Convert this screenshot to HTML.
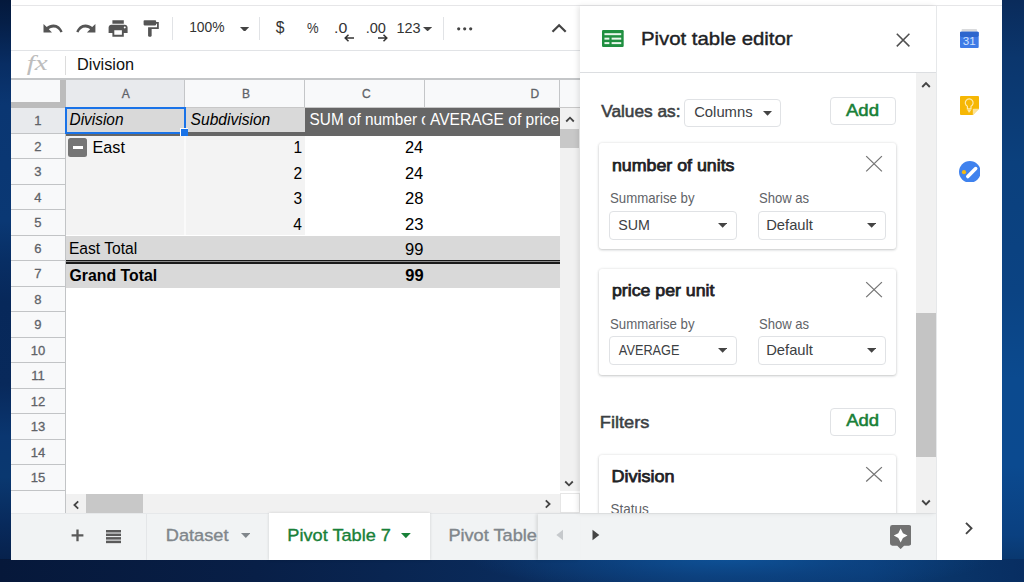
<!DOCTYPE html>
<html><head><meta charset="utf-8"><title>Pivot table editor</title>
<style>
*{box-sizing:border-box;margin:0;padding:0}
html,body{width:1024px;height:582px;overflow:hidden}
body{font-family:"Liberation Sans",sans-serif;background:#0a468a;position:relative;color:#202124}
div,span,svg{position:absolute}
#deskL{left:0;top:0;width:12px;height:582px;background:linear-gradient(180deg,#04193c 0%,#051f48 4%,#082d63 11%,#0a3672 18%,#0a3874 38%,#082e64 45%,#07285a 52%,#08295b 66%,#0a3670 75%,#0a3870 82%,#082a5c 90%,#061c42 100%)}
#deskR{left:1001px;top:0;width:23px;height:582px;background:linear-gradient(180deg,#0a2b5b 0%,#0b366d 10%,#0b407d 28%,#0b4383 50%,#0b4a8f 65%,#0b4a90 80%,#0a4080 92%,#08305f 100%)}
#deskB{left:0;top:559px;width:1024px;height:23px;background:radial-gradient(ellipse 260px 34px at 730px 0px,rgba(14,82,152,.95) 0%,rgba(13,72,138,.6) 50%,rgba(11,58,116,0) 100%),linear-gradient(90deg,#06183a 0%,#081f47 25%,#0a2b5b 50%,#0b3870 68%,#0a3a74 85%,#093468 93%,#082e62 100%)}
#win{left:11px;top:0;width:991px;height:560px;background:#fff}
.sep{top:17px;width:1px;height:23px;background:#e1e3e6}
.arr{width:0;height:0;border-left:4.7px solid transparent;border-right:4.7px solid transparent;border-top:5px solid #444}
.card{background:#fff;border-radius:3px;box-shadow:0 1px 2.500px rgba(60,64,67,.24),0 0 3px rgba(60,64,67,.12)}
.sel{border:1px solid #e0e2e5;border-radius:4px;background:#fff}
</style></head><body>
<div id="deskL"></div><div id="deskR"></div><div id="deskB"></div>
<div id="win"></div>

<div style="left:11px;top:0px;width:991.00px;height:5.00px;background:#fff;"></div>
<div style="left:12px;top:5px;width:990.00px;height:1.00px;background:#e6e6e8;"></div>
<div style="left:11px;top:50px;width:569.00px;height:1.00px;background:#e1e3e6;"></div>
<svg style="left:40px;top:16px" width="125" height="26" viewBox="0 0 125 26"><g fill="#555">
<path d="M13.5 8.5c-2.600 0-5 1-6.800 2.600L3.500 8v8.500H12l-3.200-3.200c1.300-1.100 2.900-1.800 4.700-1.800 3.200 0 5.900 2.100 6.900 5l2.200-.7C21.300 11.700 17.700 8.500 13.500 8.500z"/>
<path transform="translate(6.500,0)" d="M45.700 11.100C43.900 9.500 41.500 8.500 38.900 8.500c-4.200 0-7.800 3.200-9.100 7.300l2.200.7c1-2.900 3.700-5 6.900-5 1.800 0 3.400.7 4.700 1.800L40.400 16.500h8.500V8l-3.200 3.100z"/>
<path transform="translate(4.950,0.530) scale(0.95,0.917)" d="M84 9H70c-1.700 0-3 1.300-3 3v6h4v4h12v-4h4v-6c0-1.700-1.300-3-3-3zm-3 11h-8v-5h8v5zm3-7c-.55 0-1-.45-1-1s.45-1 1-1 1 .45 1 1-.45 1-1 1zM83 4H71v4h12V4z"/>
<path transform="translate(15.100,1.600) scale(0.894,0.868)" d="M113 5V4c0-.55-.45-1-1-1h-12c-.55 0-1 .45-1 1v4c0 .55.45 1 1 1h12c.55 0 1-.45 1-1V7h1v4h-10v10c0 .55.45 1 1 1h2c.55 0 1-.45 1-1v-8h8V5h-3z"/>
</g></svg>
<div class="sep" style="left:172px"></div>
<svg style="left:240.40px;top:26.60px" width="9.20" height="4.80" viewBox="0 0 10 5" preserveAspectRatio="none"><path d="M0 0H10L5 5z" fill="#444"/></svg>
<div class="sep" style="left:259px"></div>
<svg style="left:343px;top:33px" width="12" height="10" viewBox="0 0 12 10"><path d="M11 5H2.500M5.500 1.800L2.200 5l3.300 3.200" stroke="#333" stroke-width="1.500" fill="none"/></svg>
<svg style="left:377px;top:33px" width="12" height="10" viewBox="0 0 12 10"><path d="M1 5H9.500M6.500 1.800L9.800 5l-3.300 3.200" stroke="#333" stroke-width="1.500" fill="none"/></svg>
<svg style="left:423.20px;top:27.00px" width="9.20" height="4.30" viewBox="0 0 10 5" preserveAspectRatio="none"><path d="M0 0H10L5 5z" fill="#444"/></svg>
<div class="sep" style="left:443px"></div>
<svg style="left:455px;top:25px" width="20" height="8" viewBox="0 0 20 8"><g fill="#444"><circle cx="3.700" cy="3.800" r="1.600"/><circle cx="9.700" cy="3.800" r="1.600"/><circle cx="15.700" cy="3.800" r="1.600"/></g></svg>
<svg style="left:550px;top:21px" width="18" height="14" viewBox="0 0 18 14"><path d="M2.500 10.800 L9.100 4.200 L15.700 10.800" fill="none" stroke="#444" stroke-width="2.200"/></svg>
<div style="left:65px;top:56px;width:1.00px;height:19.00px;background:#dcdcdc;"></div>
<div style="left:11px;top:78px;width:569.00px;height:1.50px;background:#c4c6c8;"></div>
<div style="left:11px;top:79.5px;width:54.50px;height:28.50px;background:#bcbcbc;"></div>
<div style="left:11px;top:79.5px;width:49.20px;height:22.30px;background:#f8f9fa;"></div>
<div style="left:65.5px;top:79.5px;width:119.50px;height:28.50px;background:#e8eaed;border-right:1px solid #c4c6c8"></div>
<div style="left:185px;top:79.5px;width:120.00px;height:28.50px;background:#f8f9fa;border-right:1px solid #c4c6c8"></div>
<div style="left:305px;top:79.5px;width:120.30px;height:28.50px;background:#f8f9fa;border-right:1px solid #c4c6c8"></div>
<div style="left:425.3px;top:79.5px;width:134.50px;height:28.50px;background:#f8f9fa;border-right:1px solid #c4c6c8"></div>
<div style="left:559.8px;top:79.5px;width:20.20px;height:28.50px;background:#f8f9fa;"></div>
<div style="left:65.5px;top:106.8px;width:514.50px;height:1.20px;background:#c8c8c8;"></div>
<div style="left:11px;top:108.0px;width:54.50px;height:25.50px;background:#e8eaed;border-right:1.300px solid #c2c4c6;border-bottom:1.300px solid #c2c4c6"></div>
<div style="left:11px;top:133.5px;width:54.50px;height:25.50px;background:#f8f9fa;border-right:1.300px solid #c2c4c6;border-bottom:1.300px solid #c2c4c6"></div>
<div style="left:11px;top:159.0px;width:54.50px;height:25.50px;background:#f8f9fa;border-right:1.300px solid #c2c4c6;border-bottom:1.300px solid #c2c4c6"></div>
<div style="left:11px;top:184.5px;width:54.50px;height:25.50px;background:#f8f9fa;border-right:1.300px solid #c2c4c6;border-bottom:1.300px solid #c2c4c6"></div>
<div style="left:11px;top:210.0px;width:54.50px;height:25.50px;background:#f8f9fa;border-right:1.300px solid #c2c4c6;border-bottom:1.300px solid #c2c4c6"></div>
<div style="left:11px;top:235.5px;width:54.50px;height:25.50px;background:#f8f9fa;border-right:1.300px solid #c2c4c6;border-bottom:1.300px solid #c2c4c6"></div>
<div style="left:11px;top:261.0px;width:54.50px;height:25.50px;background:#f8f9fa;border-right:1.300px solid #c2c4c6;border-bottom:1.300px solid #c2c4c6"></div>
<div style="left:11px;top:286.5px;width:54.50px;height:25.50px;background:#f8f9fa;border-right:1.300px solid #c2c4c6;border-bottom:1.300px solid #c2c4c6"></div>
<div style="left:11px;top:312.0px;width:54.50px;height:25.50px;background:#f8f9fa;border-right:1.300px solid #c2c4c6;border-bottom:1.300px solid #c2c4c6"></div>
<div style="left:11px;top:337.5px;width:54.50px;height:25.50px;background:#f8f9fa;border-right:1.300px solid #c2c4c6;border-bottom:1.300px solid #c2c4c6"></div>
<div style="left:11px;top:363.0px;width:54.50px;height:25.50px;background:#f8f9fa;border-right:1.300px solid #c2c4c6;border-bottom:1.300px solid #c2c4c6"></div>
<div style="left:11px;top:388.5px;width:54.50px;height:25.50px;background:#f8f9fa;border-right:1.300px solid #c2c4c6;border-bottom:1.300px solid #c2c4c6"></div>
<div style="left:11px;top:414.0px;width:54.50px;height:25.50px;background:#f8f9fa;border-right:1.300px solid #c2c4c6;border-bottom:1.300px solid #c2c4c6"></div>
<div style="left:11px;top:439.5px;width:54.50px;height:25.50px;background:#f8f9fa;border-right:1.300px solid #c2c4c6;border-bottom:1.300px solid #c2c4c6"></div>
<div style="left:11px;top:465.0px;width:54.50px;height:25.50px;background:#f8f9fa;border-right:1.300px solid #c2c4c6;border-bottom:1.300px solid #c2c4c6"></div>
<div style="left:11px;top:490.5px;width:54.50px;height:22.50px;background:#f8f9fa;border-right:1.300px solid #c2c4c6"></div>
<div style="left:65.5px;top:108.0px;width:239.50px;height:25.50px;background:#d9d9d9;"></div>
<div style="left:305px;top:108.0px;width:254.80px;height:25.50px;background:#666;"></div>
<div style="left:65.5px;top:132px;width:494.30px;height:3.60px;background:#666;"></div>
<div style="left:65.5px;top:135.6px;width:239.50px;height:99.90px;background:#f3f3f3;"></div>
<div style="left:184px;top:135.7px;width:2.00px;height:99.80px;background:#fafafa;"></div>
<div style="left:65.5px;top:236.3px;width:494.30px;height:23.70px;background:#d9d9d9;"></div>
<div style="left:65.5px;top:259.9px;width:494.30px;height:3.80px;background:#1a1a1a;"></div>
<div style="left:65.5px;top:261.3px;width:494.30px;height:0.80px;background:#8a8a8a;"></div>
<div style="left:65.5px;top:263.7px;width:494.30px;height:24.50px;background:#d9d9d9;"></div>
<div style="left:68px;top:138.2px;width:19.00px;height:18.50px;background:#757575;border-radius:2.500px"></div>
<div style="left:73px;top:145.9px;width:9.60px;height:3.30px;background:#fff;"></div>
<div style="left:65px;top:107.300px;width:121px;height:27px;border:2px solid #1a73e8"></div>
<div style="left:180.100px;top:128.300px;width:8px;height:7.500px;background:#1a73e8;border-left:1px solid #fff;border-top:1px solid #fff"></div>
<div style="left:559.8px;top:108px;width:20.20px;height:383.00px;background:#f1f1f1;"></div>
<div style="left:560px;top:129.3px;width:19.30px;height:19.20px;background:#c8c8c8;"></div>
<svg style="left:563px;top:113.500px" width="14" height="10" viewBox="0 0 14 10"><path d="M3.200 7.500 L7 3.700 L10.800 7.500" fill="none" stroke="#444" stroke-width="1.800"/></svg>
<svg style="left:562.400px;top:478.500px" width="14" height="10" viewBox="0 0 14 10"><path d="M3.200 2.500 L7 6.300 L10.800 2.500" fill="none" stroke="#444" stroke-width="1.800"/></svg>
<div style="left:65.5px;top:491px;width:514.50px;height:3.20px;background:#fff;"></div>
<div style="left:65.5px;top:494.2px;width:494.50px;height:18.80px;background:#f1f1f1;"></div>
<div style="left:86.1px;top:494.2px;width:56.60px;height:18.80px;background:#c8c8c8;"></div>
<svg style="left:71px;top:497.600px" width="10" height="14" viewBox="0 0 10 14"><path d="M7.200 3.300 L3.400 7 L7.200 10.700" fill="none" stroke="#444" stroke-width="1.800"/></svg>
<svg style="left:543.300px;top:497.300px" width="10" height="14" viewBox="0 0 10 14"><path d="M2.800 3.300 L6.600 7 L2.800 10.700" fill="none" stroke="#444" stroke-width="1.800"/></svg>
<div style="left:560px;top:493px;width:20.00px;height:20.00px;background:#fff;border:1px solid #e6e6e6"></div>
<div style="left:11px;top:513px;width:925.40px;height:47.00px;background:#f1f3f4;border-top:1px solid #e6e8ea"></div>
<svg style="left:71px;top:529.400px" width="13" height="13" viewBox="0 0 13 13"><path d="M6.500 0.500V12.300M0.600 6.400H12.400" stroke="#5a5a5a" stroke-width="2.300" fill="none"/></svg>
<svg style="left:106px;top:529.700px" width="15" height="14" viewBox="0 0 15 14"><g fill="#5a5a5a"><rect x="0" y="0" width="15" height="2.500"/><rect x="0" y="3.550" width="15" height="2.500"/><rect x="0" y="7.100" width="15" height="2.500"/><rect x="0" y="10.650" width="15" height="2.500"/></g></svg>
<div style="left:146px;top:514px;width:1.00px;height:46.00px;background:#e4e6e8;"></div>
<svg style="left:240.60px;top:533.30px" width="9.60" height="4.90" viewBox="0 0 10 5" preserveAspectRatio="none"><path d="M0 0H10L5 5z" fill="#80868b"/></svg>
<div style="left:268.8px;top:513.4px;width:161.00px;height:46.60px;background:#fff;box-shadow:0 0 3px rgba(0,0,0,.14)"></div>
<svg style="left:401.40px;top:532.80px" width="9.80" height="5.20" viewBox="0 0 10 5" preserveAspectRatio="none"><path d="M0 0H10L5 5z" fill="#188038"/></svg>
<div style="left:537.8px;top:514px;width:42.20px;height:46.00px;background:#f1f3f4;box-shadow:-2px 0 3px rgba(0,0,0,.10)"></div>
<svg style="left:555px;top:529.400px" width="10" height="12" viewBox="0 0 10 12"><path d="M8 0.800 L1.400 6 L8 11.200z" fill="#c6c9cc"/></svg>
<svg style="left:591px;top:529.400px" width="10" height="12" viewBox="0 0 10 12"><path d="M1.500 0.800 L8.300 6 L1.500 11.200z" fill="#444"/></svg>
<svg style="left:889.700px;top:524.700px" width="21.300" height="24.600" viewBox="0 0 22 25" preserveAspectRatio="none"><path d="M2.500 0h17a2.500 2.500 0 0 1 2.500 2.500v16a2.500 2.500 0 0 1-2.500 2.500h-5l-3.500 3.500-3.500-3.500h-5a2.500 2.500 0 0 1-2.500-2.500v-16a2.500 2.500 0 0 1 2.500-2.500z" fill="#727272"/><path d="M11 3.600l2.400 4.700 4.700 2.400-4.700 2.400L11 17.800l-2.400-4.700-4.700-2.400 4.700-2.400z" fill="#fff"/></svg>
<div style="left:580.4px;top:6px;width:356.00px;height:507.00px;background:#fff;box-shadow:-2px 0 5px rgba(0,0,0,.10)"></div>
<div style="left:580.4px;top:71.6px;width:356.00px;height:1.00px;background:#dcdee1;"></div>
<svg style="left:602px;top:30.100px" width="21.700" height="16.900" viewBox="0 0 23 17" preserveAspectRatio="none"><rect x="0" y="0" width="23" height="17" rx="1.200" fill="#1f8f40"/><g fill="#e9f6ec"><rect x="2.600" y="3.200" width="17.800" height="2"/><rect x="2.600" y="7.700" width="5.200" height="2"/><rect x="10.200" y="7.700" width="10.200" height="2"/><rect x="2.600" y="12.200" width="5.200" height="2"/><rect x="10.200" y="12.200" width="10.200" height="2"/></g></svg>
<svg style="left:895px;top:32px" width="16" height="16" viewBox="0 0 16 16"><path d="M1.800 1.800 L14.400 14.400 M14.400 1.800 L1.800 14.400" stroke="#505050" stroke-width="1.550" fill="none"/></svg>
<div style="left:915.8px;top:72.6px;width:20.60px;height:440.40px;background:#f1f1f1;"></div>
<div style="left:915.8px;top:313px;width:19.80px;height:144.20px;background:#c4c4c4;"></div>
<svg style="left:918.800px;top:79px" width="14" height="10" viewBox="0 0 14 10"><path d="M3.200 8 L7 4.200 L10.800 8" fill="none" stroke="#444" stroke-width="1.900"/></svg>
<svg style="left:918.800px;top:498px" width="14" height="10" viewBox="0 0 14 10"><path d="M3.200 2.500 L7 6.300 L10.800 2.500" fill="none" stroke="#444" stroke-width="1.900"/></svg>
<div class="sel" style="left:684.300px;top:98.700px;width:97.100px;height:28.300px"></div>
<svg style="left:762.90px;top:111.00px" width="9.10" height="4.70" viewBox="0 0 10 5" preserveAspectRatio="none"><path d="M0 0H10L5 5z" fill="#444"/></svg>
<div class="sel" style="left:829.800px;top:97px;width:66px;height:27.500px"></div>
<div class="card" style="left:598.700px;top:142.8px;width:297.400px;height:106.6px"></div>
<svg style="left:865px;top:154.6px" width="18" height="17.5" viewBox="0 0 18 18" preserveAspectRatio="none"><path d="M1.200 1.200 L16.900 16.800 M16.900 1.200 L1.200 16.800" stroke="#757575" stroke-width="1.250" fill="none"/></svg>
<div class="sel" style="left:608.600px;top:210.7px;width:128.800px;height:29.5px"></div>
<div class="sel" style="left:757.500px;top:210.7px;width:128.300px;height:29.5px"></div>
<svg style="left:718.20px;top:223.05px" width="9.30" height="4.80" viewBox="0 0 10 5" preserveAspectRatio="none"><path d="M0 0H10L5 5z" fill="#444"/></svg>
<svg style="left:867.20px;top:223.05px" width="9.30" height="4.80" viewBox="0 0 10 5" preserveAspectRatio="none"><path d="M0 0H10L5 5z" fill="#444"/></svg>
<div class="card" style="left:598.700px;top:269.2px;width:297.400px;height:105.8px"></div>
<svg style="left:865px;top:280.7px" width="18" height="17.3" viewBox="0 0 18 18" preserveAspectRatio="none"><path d="M1.200 1.200 L16.900 16.800 M16.900 1.200 L1.200 16.800" stroke="#757575" stroke-width="1.250" fill="none"/></svg>
<div class="sel" style="left:608.600px;top:335.8px;width:128.800px;height:28.9px"></div>
<div class="sel" style="left:757.500px;top:335.8px;width:128.300px;height:28.9px"></div>
<svg style="left:718.20px;top:347.85px" width="9.30" height="4.80" viewBox="0 0 10 5" preserveAspectRatio="none"><path d="M0 0H10L5 5z" fill="#444"/></svg>
<svg style="left:867.20px;top:347.85px" width="9.30" height="4.80" viewBox="0 0 10 5" preserveAspectRatio="none"><path d="M0 0H10L5 5z" fill="#444"/></svg>
<div class="sel" style="left:829.800px;top:407.600px;width:66px;height:28px"></div>
<div style="left:588px;top:440px;width:327px;height:73px;overflow:hidden"><div class="card" style="left:10.700px;top:14.800px;width:297.400px;height:90px"></div></div>
<svg style="left:865px;top:466px" width="18" height="16.600" viewBox="0 0 18 18" preserveAspectRatio="none"><path d="M1.200 1.200 L16.900 16.800 M16.900 1.200 L1.200 16.800" stroke="#757575" stroke-width="1.250" fill="none"/></svg>
<div style="left:936.4px;top:6px;width:65.60px;height:554.00px;background:#fff;border-left:1px solid #e6e8ea"></div>
<svg style="left:960.100px;top:28.900px" width="18.800" height="19" viewBox="0 0 18.800 19"><rect x="1.600" y="0" width="15.400" height="4" rx="0.800" fill="#d9dadc"/><rect x="0" y="2.800" width="18.700" height="16.100" rx="1" fill="#3f7be6"/><path d="M0 3.800a1 1 0 0 1 1-1h16.700a1 1 0 0 1 1 1V6.800L17.500 8H1.200L0 6.800z" fill="#2d66cd"/><text x="9.300" y="15.600" font-family="Liberation Sans, sans-serif" font-size="11.600" fill="#cfe1fc" text-anchor="middle">31</text></svg>
<svg style="left:960.100px;top:95.600px" width="19" height="19" viewBox="0 0 19 19"><path d="M1 0h17a1 1 0 0 1 1 1v11.800L12.800 19H1a1 1 0 0 1-1-1V1a1 1 0 0 1 1-1z" fill="#f6b704"/><path d="M12.800 19v-5.200a1 1 0 0 1 1-1H19z" fill="#fbe39a"/><g fill="none" stroke="#fdebb3" stroke-width="1.150"><path d="M7.400 10.300a3.900 3.900 0 1 1 3.600 0v2.500H7.400z"/><path d="M7.600 14.300h3.200"/><path d="M8.200 15.700h2"/></g></svg>
<svg style="left:958.700px;top:160.600px" width="21.700" height="21.700" viewBox="0 0 21.700 21.700"><circle cx="10.850" cy="10.850" r="10.850" fill="#3f82ee"/><path d="M8.800 15.600 L16.700 7.500" stroke="#fff" stroke-width="3.500" stroke-linecap="round"/><circle cx="5" cy="11.200" r="2.100" fill="#f5b912"/></svg>
<svg style="left:963px;top:521px" width="11" height="15" viewBox="0 0 11 15"><path d="M3 1.800 L8.500 7.300 L3 12.800" fill="none" stroke="#444" stroke-width="1.900"/></svg>
<svg style="left:0;top:0" width="1024" height="582" viewBox="0 0 1024 582"><text x="189.16" y="32.40" font-family="Liberation Sans, sans-serif" font-size="14.4" fill="#333" textLength="35.43" lengthAdjust="spacingAndGlyphs">100%</text>
<text x="275.84" y="33.30" font-family="Liberation Sans, sans-serif" font-size="16.5" fill="#333" textLength="8.71" lengthAdjust="spacingAndGlyphs">$</text>
<text x="307.04" y="33.30" font-family="Liberation Sans, sans-serif" font-size="14.2" fill="#333" textLength="11.60" lengthAdjust="spacingAndGlyphs">%</text>
<text x="334.07" y="33.30" font-family="Liberation Sans, sans-serif" font-size="14.2" fill="#333" textLength="13.25" lengthAdjust="spacingAndGlyphs">.0</text>
<text x="365.69" y="33.10" font-family="Liberation Sans, sans-serif" font-size="14.2" fill="#333" textLength="20.26" lengthAdjust="spacingAndGlyphs">.00</text>
<text x="396.52" y="33.10" font-family="Liberation Sans, sans-serif" font-size="14.2" fill="#333" textLength="24.11" lengthAdjust="spacingAndGlyphs">123</text>
<text x="26.71" y="69.60" font-family="Liberation Serif, serif" font-size="21" fill="#bdbdbd" textLength="20.99" lengthAdjust="spacingAndGlyphs" font-style="italic">fx</text>
<text x="77.06" y="69.60" font-family="Liberation Sans, sans-serif" font-size="16.3" fill="#111" textLength="56.98" lengthAdjust="spacingAndGlyphs">Division</text>
<text transform="translate(125.80,97.50) scale(1.0,1)" font-family="Liberation Sans, sans-serif" font-size="12" fill="#5f6368" stroke="#5f6368" stroke-width="0.3" text-anchor="middle">A</text>
<text transform="translate(246.00,97.50) scale(1.0,1)" font-family="Liberation Sans, sans-serif" font-size="12" fill="#5f6368" stroke="#5f6368" stroke-width="0.3" text-anchor="middle">B</text>
<text transform="translate(366.30,97.50) scale(1.0,1)" font-family="Liberation Sans, sans-serif" font-size="12" fill="#5f6368" stroke="#5f6368" stroke-width="0.3" text-anchor="middle">C</text>
<text transform="translate(534.90,97.50) scale(1.0,1)" font-family="Liberation Sans, sans-serif" font-size="12" fill="#5f6368" stroke="#5f6368" stroke-width="0.3" text-anchor="middle">D</text>
<text transform="translate(38.00,125.20) scale(0.96,1)" font-family="Liberation Sans, sans-serif" font-size="13.6" fill="#5f6368" stroke="#5f6368" stroke-width="0.3" text-anchor="middle">1</text>
<text transform="translate(38.00,150.70) scale(0.96,1)" font-family="Liberation Sans, sans-serif" font-size="13.6" fill="#5f6368" stroke="#5f6368" stroke-width="0.3" text-anchor="middle">2</text>
<text transform="translate(38.00,176.20) scale(0.96,1)" font-family="Liberation Sans, sans-serif" font-size="13.6" fill="#5f6368" stroke="#5f6368" stroke-width="0.3" text-anchor="middle">3</text>
<text transform="translate(38.00,201.70) scale(0.96,1)" font-family="Liberation Sans, sans-serif" font-size="13.6" fill="#5f6368" stroke="#5f6368" stroke-width="0.3" text-anchor="middle">4</text>
<text transform="translate(38.00,227.20) scale(0.96,1)" font-family="Liberation Sans, sans-serif" font-size="13.6" fill="#5f6368" stroke="#5f6368" stroke-width="0.3" text-anchor="middle">5</text>
<text transform="translate(38.00,252.70) scale(0.96,1)" font-family="Liberation Sans, sans-serif" font-size="13.6" fill="#5f6368" stroke="#5f6368" stroke-width="0.3" text-anchor="middle">6</text>
<text transform="translate(38.00,278.20) scale(0.96,1)" font-family="Liberation Sans, sans-serif" font-size="13.6" fill="#5f6368" stroke="#5f6368" stroke-width="0.3" text-anchor="middle">7</text>
<text transform="translate(38.00,303.70) scale(0.96,1)" font-family="Liberation Sans, sans-serif" font-size="13.6" fill="#5f6368" stroke="#5f6368" stroke-width="0.3" text-anchor="middle">8</text>
<text transform="translate(38.00,329.20) scale(0.96,1)" font-family="Liberation Sans, sans-serif" font-size="13.6" fill="#5f6368" stroke="#5f6368" stroke-width="0.3" text-anchor="middle">9</text>
<text transform="translate(38.00,354.70) scale(0.96,1)" font-family="Liberation Sans, sans-serif" font-size="13.6" fill="#5f6368" stroke="#5f6368" stroke-width="0.3" text-anchor="middle">10</text>
<text transform="translate(38.00,380.20) scale(0.96,1)" font-family="Liberation Sans, sans-serif" font-size="13.6" fill="#5f6368" stroke="#5f6368" stroke-width="0.3" text-anchor="middle">11</text>
<text transform="translate(38.00,405.70) scale(0.96,1)" font-family="Liberation Sans, sans-serif" font-size="13.6" fill="#5f6368" stroke="#5f6368" stroke-width="0.3" text-anchor="middle">12</text>
<text transform="translate(38.00,431.20) scale(0.96,1)" font-family="Liberation Sans, sans-serif" font-size="13.6" fill="#5f6368" stroke="#5f6368" stroke-width="0.3" text-anchor="middle">13</text>
<text transform="translate(38.00,456.70) scale(0.96,1)" font-family="Liberation Sans, sans-serif" font-size="13.6" fill="#5f6368" stroke="#5f6368" stroke-width="0.3" text-anchor="middle">14</text>
<text transform="translate(38.00,482.20) scale(0.96,1)" font-family="Liberation Sans, sans-serif" font-size="13.6" fill="#5f6368" stroke="#5f6368" stroke-width="0.3" text-anchor="middle">15</text>
<text x="69.54" y="125.10" font-family="Liberation Sans, sans-serif" font-size="16.7" fill="#000" textLength="53.93" lengthAdjust="spacingAndGlyphs" font-style="italic">Division</text>
<text x="190.57" y="125.10" font-family="Liberation Sans, sans-serif" font-size="16.7" fill="#000" textLength="79.72" lengthAdjust="spacingAndGlyphs" font-style="italic">Subdivision</text>
<clipPath id="cC"><rect x="305" y="108" width="120.3" height="28"/></clipPath><clipPath id="cD"><rect x="425.300" y="108" width="134.500" height="28"/></clipPath>
<text x="309.61" y="125.10" font-family="Liberation Sans, sans-serif" font-size="16.7" fill="#fff" textLength="161.15" lengthAdjust="spacingAndGlyphs" clip-path="url(#cC)">SUM of number of units</text>
<text x="429.96" y="125.10" font-family="Liberation Sans, sans-serif" font-size="16.7" fill="#fff" textLength="185.48" lengthAdjust="spacingAndGlyphs" clip-path="url(#cD)">AVERAGE of price per unit</text>
<text x="92.57" y="153.20" font-family="Liberation Sans, sans-serif" font-size="16.7" fill="#000" textLength="32.37" lengthAdjust="spacingAndGlyphs">East</text>
<text x="293.62" y="153.20" font-family="Liberation Sans, sans-serif" font-size="16.7" fill="#000" textLength="8.64" lengthAdjust="spacingAndGlyphs">1</text>
<text x="404.98" y="153.20" font-family="Liberation Sans, sans-serif" font-size="16.7" fill="#000" textLength="18.21" lengthAdjust="spacingAndGlyphs">24</text>
<text x="293.62" y="178.80" font-family="Liberation Sans, sans-serif" font-size="16.7" fill="#000" textLength="8.64" lengthAdjust="spacingAndGlyphs">2</text>
<text x="404.98" y="178.80" font-family="Liberation Sans, sans-serif" font-size="16.7" fill="#000" textLength="18.21" lengthAdjust="spacingAndGlyphs">24</text>
<text x="293.54" y="204.20" font-family="Liberation Sans, sans-serif" font-size="16.7" fill="#000" textLength="8.64" lengthAdjust="spacingAndGlyphs">3</text>
<text x="404.97" y="204.20" font-family="Liberation Sans, sans-serif" font-size="16.7" fill="#000" textLength="18.48" lengthAdjust="spacingAndGlyphs">28</text>
<text x="293.31" y="229.50" font-family="Liberation Sans, sans-serif" font-size="16.7" fill="#000" textLength="8.64" lengthAdjust="spacingAndGlyphs">4</text>
<text x="404.97" y="229.50" font-family="Liberation Sans, sans-serif" font-size="16.7" fill="#000" textLength="18.48" lengthAdjust="spacingAndGlyphs">23</text>
<text x="68.91" y="254.40" font-family="Liberation Sans, sans-serif" font-size="16.7" fill="#000" textLength="68.36" lengthAdjust="spacingAndGlyphs">East Total</text>
<text x="405.12" y="254.50" font-family="Liberation Sans, sans-serif" font-size="16.7" fill="#000" textLength="18.37" lengthAdjust="spacingAndGlyphs">99</text>
<text x="69.57" y="281.20" font-family="Liberation Sans, sans-serif" font-size="16.7" fill="#000" textLength="87.54" lengthAdjust="spacingAndGlyphs" font-weight="bold">Grand Total</text>
<text x="405.32" y="281.30" font-family="Liberation Sans, sans-serif" font-size="16.7" fill="#000" textLength="18.29" lengthAdjust="spacingAndGlyphs" font-weight="bold">99</text>
<text x="165.80" y="540.70" font-family="Liberation Sans, sans-serif" font-size="16.7" fill="#80868b" textLength="62.66" lengthAdjust="spacingAndGlyphs" stroke="#80868b" stroke-width="0.35">Dataset</text>
<text x="287.30" y="540.80" font-family="Liberation Sans, sans-serif" font-size="16.7" fill="#188038" textLength="103.67" lengthAdjust="spacingAndGlyphs" stroke="#188038" stroke-width="0.35">Pivot Table 7</text>
<clipPath id="cT"><rect x="440" y="520" width="97.800" height="30"/></clipPath>
<text x="448.40" y="540.800" font-family="Liberation Sans, sans-serif" font-size="16.700" fill="#80868b" stroke="#80868b" stroke-width="0.350" textLength="103.67" lengthAdjust="spacingAndGlyphs" clip-path="url(#cT)">Pivot Table 6</text>
<text x="640.92" y="44.80" font-family="Liberation Sans, sans-serif" font-size="19" fill="#202124" textLength="151.72" lengthAdjust="spacingAndGlyphs" stroke="#202124" stroke-width="0.4">Pivot table editor</text>
<text x="601.21" y="117.20" font-family="Liberation Sans, sans-serif" font-size="17" fill="#3c4043" textLength="79.24" lengthAdjust="spacingAndGlyphs" stroke="#3c4043" stroke-width="0.55">Values as:</text>
<text x="694.16" y="117.20" font-family="Liberation Sans, sans-serif" font-size="14.1" fill="#3c4043" textLength="58.47" lengthAdjust="spacingAndGlyphs">Columns</text>
<text x="845.95" y="115.70" font-family="Liberation Sans, sans-serif" font-size="17.3" fill="#188038" textLength="33.04" lengthAdjust="spacingAndGlyphs" stroke="#188038" stroke-width="0.55">Add</text>
<text x="611.94" y="171.10" font-family="Liberation Sans, sans-serif" font-size="17" fill="#202124" textLength="122.58" lengthAdjust="spacingAndGlyphs" stroke="#202124" stroke-width="0.75">number of units</text>
<text x="610.00" y="203.40" font-family="Liberation Sans, sans-serif" font-size="14.1" fill="#5f6368" textLength="84.54" lengthAdjust="spacingAndGlyphs">Summarise by</text>
<text x="759.01" y="203.40" font-family="Liberation Sans, sans-serif" font-size="14.1" fill="#5f6368" textLength="50.15" lengthAdjust="spacingAndGlyphs">Show as</text>
<text x="618.26" y="229.90" font-family="Liberation Sans, sans-serif" font-size="14.2" fill="#3c4043" textLength="31.68" lengthAdjust="spacingAndGlyphs">SUM</text>
<text x="766.18" y="229.90" font-family="Liberation Sans, sans-serif" font-size="14.2" fill="#3c4043" textLength="46.74" lengthAdjust="spacingAndGlyphs">Default</text>
<text x="611.95" y="296.00" font-family="Liberation Sans, sans-serif" font-size="17" fill="#202124" textLength="102.50" lengthAdjust="spacingAndGlyphs" stroke="#202124" stroke-width="0.75">price per unit</text>
<text x="610.00" y="328.70" font-family="Liberation Sans, sans-serif" font-size="14.1" fill="#5f6368" textLength="84.54" lengthAdjust="spacingAndGlyphs">Summarise by</text>
<text x="759.01" y="328.70" font-family="Liberation Sans, sans-serif" font-size="14.1" fill="#5f6368" textLength="50.15" lengthAdjust="spacingAndGlyphs">Show as</text>
<text x="618.87" y="354.90" font-family="Liberation Sans, sans-serif" font-size="14.2" fill="#3c4043" textLength="60.65" lengthAdjust="spacingAndGlyphs">AVERAGE</text>
<text x="766.18" y="354.90" font-family="Liberation Sans, sans-serif" font-size="14.2" fill="#3c4043" textLength="46.74" lengthAdjust="spacingAndGlyphs">Default</text>
<text x="599.80" y="428.40" font-family="Liberation Sans, sans-serif" font-size="17" fill="#3c4043" textLength="49.64" lengthAdjust="spacingAndGlyphs" stroke="#3c4043" stroke-width="0.5">Filters</text>
<text x="846.15" y="426.00" font-family="Liberation Sans, sans-serif" font-size="17.3" fill="#188038" textLength="32.83" lengthAdjust="spacingAndGlyphs" stroke="#188038" stroke-width="0.55">Add</text>
<text x="611.61" y="481.60" font-family="Liberation Sans, sans-serif" font-size="17" fill="#202124" textLength="63.03" lengthAdjust="spacingAndGlyphs" stroke="#202124" stroke-width="0.75">Division</text>
<clipPath id="cS"><rect x="600" y="495" width="100" height="18"/></clipPath>
<text x="610.59" y="514.00" font-family="Liberation Sans, sans-serif" font-size="14.1" fill="#5f6368" textLength="38.28" lengthAdjust="spacingAndGlyphs" clip-path="url(#cS)">Status</text></svg>
</body></html>
